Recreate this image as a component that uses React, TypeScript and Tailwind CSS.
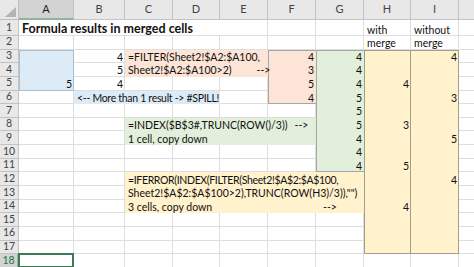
import React from 'react';

const ROW_START = [
  'row-start-1', 'row-start-2', 'row-start-3', 'row-start-4', 'row-start-5', 'row-start-6', 'row-start-7',
  'row-start-8', 'row-start-9', 'row-start-10', 'row-start-11', 'row-start-12', 'row-start-13', 'row-start-14',
  'row-start-15', 'row-start-16', 'row-start-17', 'row-start-18', 'row-start-19',
];
const COL_START = [
  'col-start-1', 'col-start-2', 'col-start-3', 'col-start-4', 'col-start-5', 'col-start-6',
  'col-start-7', 'col-start-8', 'col-start-9', 'col-start-10', 'col-start-11',
];
const ROW_SPAN = [
  'row-span-1', 'row-span-2', 'row-span-3', 'row-span-4', 'row-span-5', 'row-span-6', 'row-span-7', 'row-span-8',
  'row-span-9', 'row-span-10', 'row-span-11', 'row-span-12', 'row-span-13', 'row-span-14', 'row-span-15',
];
const COL_SPAN = ['col-span-1', 'col-span-2', 'col-span-3', 'col-span-4', 'col-span-5'];

// J is cut off by the window, its letter isn't visible
const LETTERS = ['A', 'B', 'C', 'D', 'E', 'F', 'G', 'H', 'I', ''];
const ROWS = Array.from({ length: 18 }, (_, i) => i + 1);

// row = excel row (1..18), col = excel column (A = 1)
const at = (row: number, col: number, rows = 1, cols = 1) =>
  `${ROW_START[row]} ${COL_START[col]} ${ROW_SPAN[rows - 1]} ${COL_SPAN[cols - 1]}`;

type TxtProps = {
  row: number;
  col: number;
  cols?: number;
  right?: boolean;
  className?: string;
  children: React.ReactNode;
};

const Txt = ({ row, col, cols = 1, right, className = '', children }: TxtProps) => (
  <div
    className={`${at(row, col, 1, cols)} flex items-end pb-[1px] whitespace-nowrap text-[10.5px] leading-none text-[#111] ${
      right ? 'justify-end pr-[2px]' : 'pl-[3px]'
    } ${className}`}
  >
    {children}
  </div>
);

const Fill = ({ row, col, rows = 1, cols = 1, className }: { row: number; col: number; rows?: number; cols?: number; className: string }) => (
  <div className={`${at(row, col, rows, cols)} ${className}`} />
);

const numbers: [number, number, string][] = [
  [3, 2, '4'], [4, 2, '5'], [5, 2, '4'],
  [5, 1, '5'],
  [3, 6, '4'], [4, 6, '3'], [5, 6, '5'], [6, 6, '4'],
  [3, 7, '4'], [4, 7, '4'], [5, 7, '4'], [6, 7, '5'], [7, 7, '5'], [8, 7, '5'], [9, 7, '4'], [10, 7, '4'], [11, 7, '4'],
  [5, 8, '4'], [8, 8, '3'], [11, 8, '5'], [14, 8, '4'],
  [3, 9, '4'], [6, 9, '3'], [9, 9, '5'], [12, 9, '4'],
];

export default function App() {
  return (
    <div className="w-[474px] h-[267px] overflow-hidden bg-white font-['Lato','Liberation_Sans',sans-serif]">
      <div className="grid grid-cols-[19px_55px_51px_48px_47px_48px_48px_48px_47px_48px_40px] grid-rows-[20px_16px_repeat(17,13.65px)]">
        {/* corner */}
        <div className="row-start-1 col-start-1 bg-[#e8e8e8] border-r border-b border-[#bdbdbd] flex items-end justify-end p-[2px]">
          <svg width="11" height="10" viewBox="0 0 11 10">
            <polygon points="11,0 11,10 0,10" fill="#b3b3b3" />
          </svg>
        </div>

        {/* column headers */}
        {LETTERS.map((l, i) => (
          <div
            key={i}
            className={`row-start-1 ${COL_START[i + 1]} flex items-center justify-center text-[11px] border-r ${
              i === 0
                ? 'bg-[#d3d3d3] text-[#1e1e1e] border-b-2 border-b-[#8fb49c] border-r-[#c3c3c3]'
                : 'bg-[#e8e8e8] text-[#444] border-b border-[#c3c3c3]'
            }`}
          >
            {l}
          </div>
        ))}

        {/* row headers + gridlines */}
        {ROWS.map((r) => (
          <React.Fragment key={r}>
            <div
              className={`${ROW_START[r]} col-start-1 flex items-center justify-center text-[10.5px] border-b ${
                r === 18
                  ? 'bg-[#d3d3d3] text-[#217346] border-r-2 border-r-[#8fb49c] border-b-[#c3c3c3]'
                  : 'bg-[#e8e8e8] text-[#444] border-r border-[#c3c3c3]'
              }`}
            >
              {r}
            </div>
            {LETTERS.map((_, i) => (
              <div key={i} className={`${at(r, i + 1)} border-r border-b border-[#dedede]`} />
            ))}
          </React.Fragment>
        ))}

        {/* fills */}
        <Fill row={1} col={1} cols={4} className="bg-white border-b border-[#dedede]" />
        <Fill row={3} col={1} rows={3} className="bg-[#ddebf7] border border-[#a9bdd3]" />
        <Fill row={3} col={3} rows={2} cols={3} className="bg-[#fce4d6]" />
        <Fill row={3} col={6} rows={4} className="bg-[#fce4d6] border border-r-0 border-[#a6a6a6]" />
        <Fill row={3} col={7} rows={9} className="bg-[#e2efda] border border-r-0 border-[#a6a6a6]" />
        <Fill row={3} col={8} rows={15} className="bg-[#fff2cc] border border-[#a39d8a]" />
        <Fill row={3} col={9} rows={15} className="bg-[#fff2cc] border border-l-0 border-[#a39d8a]" />
        <Fill row={6} col={2} cols={3} className="bg-[#ddebf7]" />
        <Fill row={8} col={3} rows={2} cols={4} className="bg-[#e2efda]" />
        <Fill row={12} col={3} rows={3} cols={5} className="bg-[#fff2cc]" />

        {/* selected cell A18 */}
        <div className={`${at(18, 1)} border-2 border-[#3d7a57] -ml-[1px] -mt-[1px]`} />

        {/* texts */}
        <Txt row={1} col={1} cols={4} className="font-bold text-[12.5px]">
          Formula results in merged cells
        </Txt>
        <Txt row={1} col={8}>with</Txt>
        <Txt row={1} col={9}>without</Txt>
        <Txt row={2} col={8}>merge</Txt>
        <Txt row={2} col={9}>merge</Txt>

        <Txt row={3} col={3} cols={3}>=FILTER(Sheet2!$A2:$A100,</Txt>
        <Txt row={4} col={3} cols={3}>
          Sheet2!$A2:$A100&gt;2)<span className="ml-[25px]">--&gt;</span>
        </Txt>
        <Txt row={6} col={2} cols={3} className="tracking-[-0.3px]">
          &lt;-- More than 1 result -&gt; #SPILL!
        </Txt>
        <Txt row={8} col={3} cols={4}>
          =INDEX($B$3#,TRUNC(ROW()/3))<span className="ml-[7px]">--&gt;</span>
        </Txt>
        <Txt row={9} col={3} cols={4}>1 cell, copy down</Txt>
        <Txt row={12} col={3} cols={5} className="tracking-[-0.35px]">
          =IFERROR(INDEX(FILTER(Sheet2!$A$2:$A$100,
        </Txt>
        <Txt row={13} col={3} cols={5}>Sheet2!$A$2:$A$100&gt;2),TRUNC(ROW(H3)/3)),"")</Txt>
        <Txt row={14} col={3} cols={4}>3 cells, copy down</Txt>
        <Txt row={14} col={7} className="pl-[7px]">--&gt;</Txt>

        {numbers.map(([r, c, v], i) => (
          <Txt key={i} row={r} col={c} right>
            {v}
          </Txt>
        ))}
      </div>
    </div>
  );
}
